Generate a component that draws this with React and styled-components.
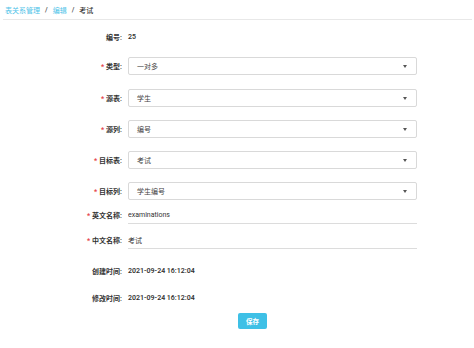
import React from "react";
import styled, { createGlobalStyle } from "styled-components";

const GlobalStyle = createGlobalStyle`
  body {
    margin: 0;
    background: #fff;
    font-family: Roboto, "Noto Sans CJK SC", sans-serif;
    color: #333;
  }
`

const Page = styled.div`
  width: 474px;
  height: 348px;
  background: #fff;
`

const Crumbs = styled.div`
  display: flex;
  align-items: center;
  gap: 4px;
  height: 19px;
  margin: 0 2px 0 3px;
  padding-left: 2px;
  font-size: 7px;
  border-bottom: 1px solid #e8e8e8;
`

const CrumbLink = styled.span`
  color: ${p => (p.$current ? "#333" : "#4fc3e8")};
  font-weight: ${p => (p.$current ? 500 : 400)};
`

const Sep = styled.span`
  color: #555;
  font-weight: 600;
  margin: 0 1px;
`

const Form = styled.form`
  display: flex;
  flex-direction: column;
`

const Row = styled.div`
  display: grid;
  grid-template-columns: 122px 289px;
  column-gap: 6px;
  align-items: center;
  height: 18px;
  margin-top: ${p => p.$top}px;
`

const Label = styled.label`
  text-align: right;
  font-size: 7px;
  font-weight: 600;
  color: #333;
`

const Star = styled.span`
  color: #e4393c;
  margin-right: 2px;
`

const Value = styled.div`
  font-size: 7px;
  font-weight: 600;
  color: #333;
`

const Select = styled.div`
  display: flex;
  align-items: center;
  justify-content: space-between;
  height: 18px;
  box-sizing: border-box;
  padding: 0 9px 0 8px;
  border: 1px solid #d9d9d9;
  border-radius: 2px;
  font-size: 7px;
  color: #444;
`

const Caret = styled.span`
  width: 0;
  height: 0;
  border-left: 2.5px solid transparent;
  border-right: 2.5px solid transparent;
  border-top: 3px solid #555;
`

const TextInput = styled.input`
  height: 18px;
  box-sizing: border-box;
  border: none;
  border-bottom: 1px solid #dcdcdc;
  padding: 0;
  font-family: inherit;
  font-size: 7px;
  color: #333;
  outline: none;
  background: transparent;
`

const Actions = styled.div`
  display: flex;
  justify-content: flex-start;
  padding-left: 238px;
  margin-top: 6px;
`

const SaveButton = styled.button`
  width: 29px;
  height: 16px;
  border: none;
  border-radius: 2px;
  background: #3ec0e6;
  color: #fff;
  font-family: inherit;
  font-size: 6.5px;
  font-weight: 600;
  padding: 0;
`

const selects = [
  { label: "类型", value: "一对多", top: 11 },
  { label: "源表", value: "学生", top: 14 },
  { label: "源列", value: "编号", top: 13 },
  { label: "目标表", value: "考试", top: 13 },
  { label: "目标列", value: "学生编号", top: 13 },
];

export default function App() {
  return (
    <Page>
      <GlobalStyle />
      <Crumbs>
        <CrumbLink>表关系管理</CrumbLink>
        <Sep>/</Sep>
        <CrumbLink>编辑</CrumbLink>
        <Sep>/</Sep>
        <CrumbLink $current>考试</CrumbLink>
      </Crumbs>

      <Form onSubmit={e => e.preventDefault()}>
        <Row $top={8}>
          <Label>编号:</Label>
          <Value>25</Value>
        </Row>

        {selects.map(s => (
          <Row key={s.label} $top={s.top}>
            <Label><Star>*</Star>{s.label}:</Label>
            <Select>
              <span>{s.value}</span>
              <Caret />
            </Select>
          </Row>
        ))}

        <Row $top={6}>
          <Label><Star>*</Star>英文名称:</Label>
          <TextInput defaultValue="examinations" />
        </Row>
        <Row $top={7}>
          <Label><Star>*</Star>中文名称:</Label>
          <TextInput defaultValue="考试" />
        </Row>

        <Row $top={13}>
          <Label>创建时间:</Label>
          <Value>2021-09-24 16:12:04</Value>
        </Row>
        <Row $top={9}>
          <Label>修改时间:</Label>
          <Value>2021-09-24 16:12:04</Value>
        </Row>

        <Actions>
          <SaveButton type="submit">保存</SaveButton>
        </Actions>
      </Form>
    </Page>
  );
}
